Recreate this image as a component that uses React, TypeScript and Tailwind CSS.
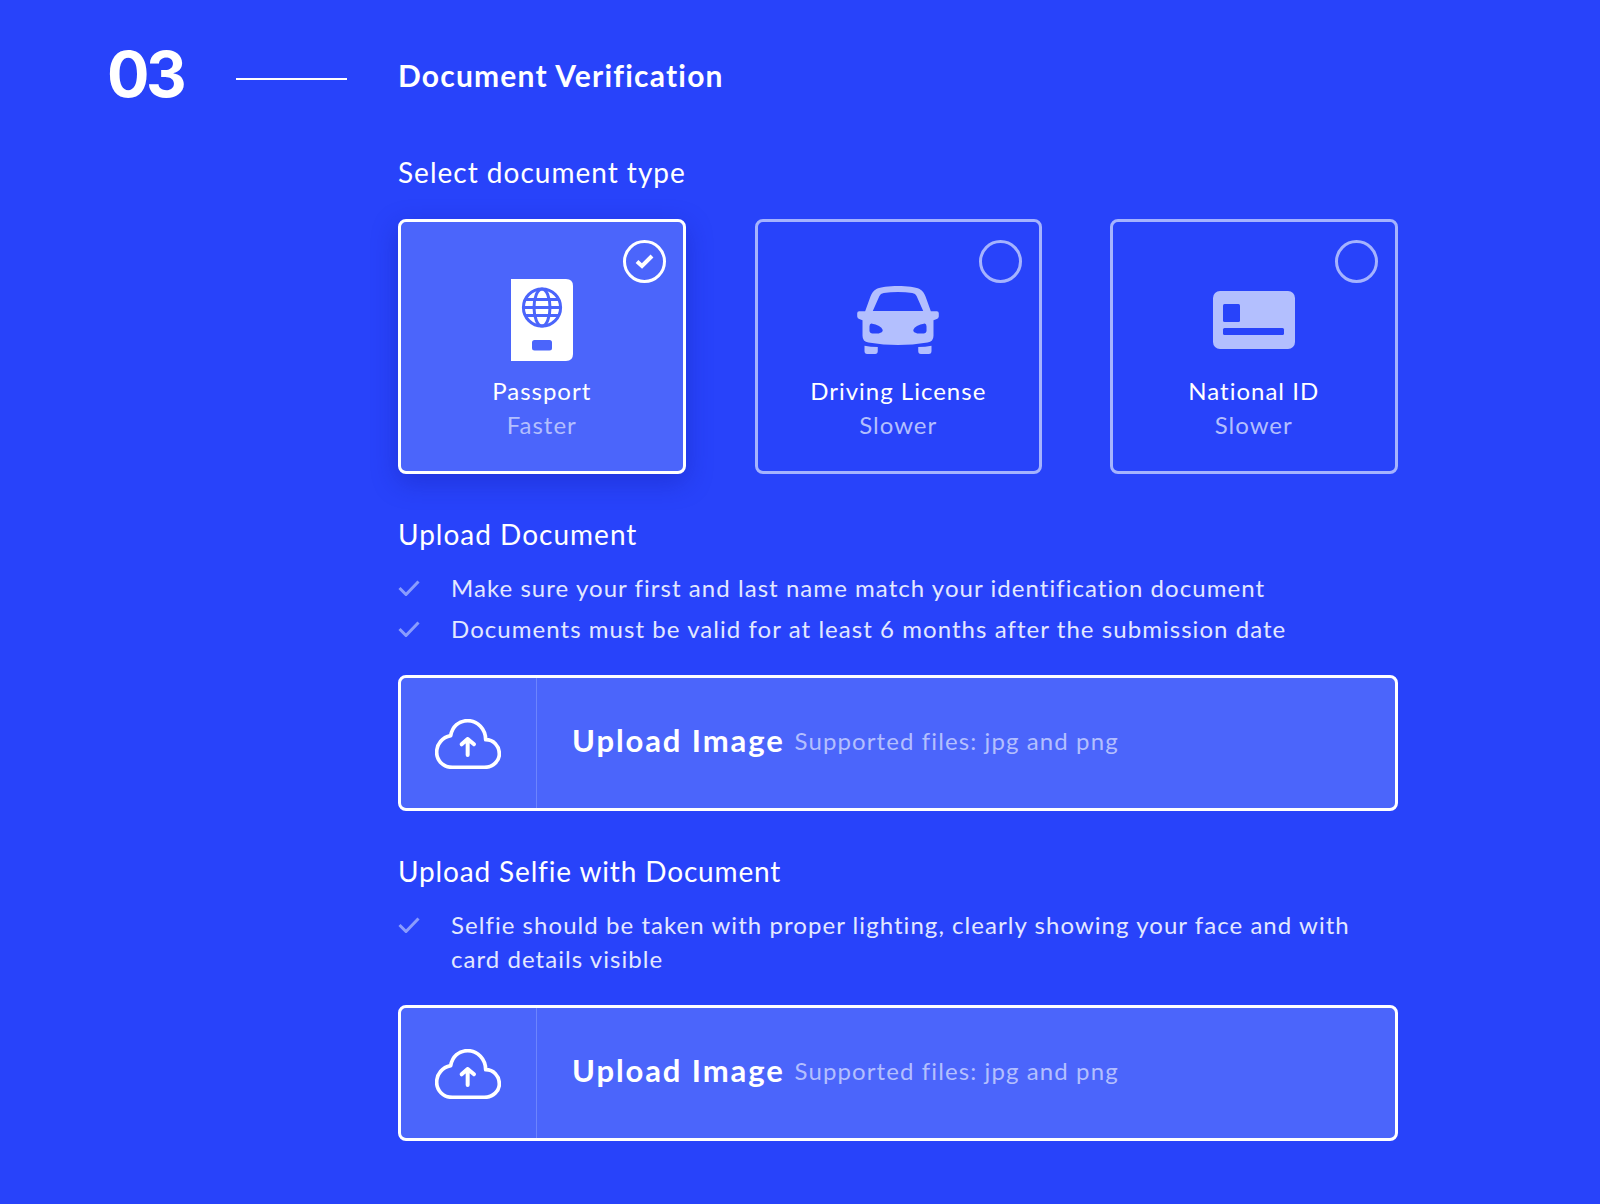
import { Fragment } from 'react';

function PassportIcon() {
  return (
    <svg width="62" height="82" viewBox="0 0 62 82">
      <path d="M0 0H55Q62 0 62 7V75Q62 82 55 82H0Z" fill="#fff" />
      <g fill="none" stroke="#4b65fb" strokeWidth="3">
        <circle cx="31" cy="28.5" r="18.6" />
        <ellipse cx="31" cy="28.5" rx="8" ry="18.6" />
        <path d="M12.5 28.5H49.5M14 20.5H48M14 36.5H48" />
      </g>
      <rect x="21" y="61" width="20" height="10.5" rx="2.5" fill="#4b65fb" />
    </svg>
  );
}

function CarIcon() {
  return (
    <svg width="82" height="68" viewBox="0 0 246 205" fill="#b3bffe">
      <path
        fillRule="evenodd"
        d="M123 0C95 0 70 3 58 9C48 14 44 22 40 32L24 76L6 76Q0 76 0 82L0 92Q0 98 8 100L16 103L16 150Q16 168 34 170Q80 178 123 178Q166 178 212 170Q230 168 230 150L230 103L238 100Q246 98 246 92L246 82Q246 76 240 76L222 76L206 32C202 22 198 14 188 9C176 3 151 0 123 0ZM47 75L67 30Q70 22 80 21Q100 18 123 18Q146 18 166 21Q176 22 179 30L199 75ZM42 113Q37 115 37 122L37 135Q38 143 46 143L65 143Q77 141 77 133Q72 118 42 113ZM204 113Q209 115 209 122L209 135Q208 143 200 143L181 143Q169 141 169 133Q174 118 204 113Z"
      />
      <path d="M22 180Q40 184 62 184L62 196Q62 205 54 205L30 205Q22 205 22 196Z" />
      <path d="M224 180Q206 184 184 184L184 196Q184 205 192 205L216 205Q224 205 224 196Z" />
    </svg>
  );
}

function IdCardIcon() {
  return (
    <svg width="82" height="58" viewBox="0 0 82 58">
      <rect width="82" height="58" rx="7" fill="#b3bffe" />
      <rect x="10" y="13" width="17" height="18" rx="1.5" fill="#2843fa" />
      <rect x="10" y="37" width="61" height="7" rx="1.5" fill="#2843fa" />
    </svg>
  );
}

function CloudIcon() {
  return (
    <svg width="66" height="50" viewBox="0 0 198 150" fill="none" stroke="#fff" strokeLinecap="round" strokeLinejoin="round">
      <path strokeWidth="11" d="M52 145L148 145C175 145 193 125 193 105C193 80 175 62 152 62C152 30 128 5 98 5C72 5 52 22 47 50C22 55 5 75 5 100C5 125 25 145 52 145Z" />
      <path strokeWidth="12" d="M98 108V60M80 76L98 60L117 76" />
    </svg>
  );
}

function Tick() {
  return (
    <svg width="22" height="16" viewBox="0 0 22 16" fill="none" stroke="#8a9cfd" strokeWidth="3" className="mt-[9px] shrink-0">
      <path d="M1.5 8L8 14.5L20.5 1.5" />
    </svg>
  );
}

function DocCard({ icon, title, speed, selected, className = '' }: { icon: React.ReactNode; title: string; speed: string; selected?: boolean; className?: string }) {
  return (
    <div
      className={
        (selected
          ? 'relative flex h-[255px] w-[287.5px] flex-col items-center rounded-[8px] border-[3px] border-white bg-[#4b65fb] pt-[57px] shadow-[0_8px_26px_rgba(20,30,170,0.4)] '
          : 'relative flex h-[255px] w-[287.5px] flex-col items-center rounded-[8px] border-[3px] border-[#a5b3fe] pt-[57px] ') + className
      }
    >
      {selected ? (
        <div className="absolute right-[17px] top-[18px] flex h-[43px] w-[43px] items-center justify-center rounded-full border-[3px] border-white">
          <svg width="19" height="15" viewBox="0 0 19 15" fill="none" stroke="#fff" strokeWidth="4">
            <path d="M2 7.5L7 12L17 2" />
          </svg>
        </div>
      ) : (
        <div className="absolute right-[17px] top-[18px] h-[43px] w-[43px] rounded-full border-[3px] border-[#a5b3fe]" />
      )}
      <div className="flex h-[82px] items-center justify-center">{icon}</div>
      <div className="mt-[13px] text-[24px] leading-[34px] tracking-[1px] text-white">{title}</div>
      <div className="text-[24px] leading-[34px] tracking-[1px] text-[#b3bffe]">{speed}</div>
    </div>
  );
}

function UploadBox({ className }: { className: string }) {
  return (
    <div className={'flex h-[136px] items-stretch rounded-[8px] border-[3px] border-white bg-[#4b65fb] ' + className}>
      <div className="flex w-[136px] items-center justify-center border-r border-[#6d84fd] pr-[1px] pt-[2px]">
        <CloudIcon />
      </div>
      <div className="flex items-center pb-[5px] pl-[35px]">
        <span className="text-[31px] font-bold tracking-[1.9px] text-white">Upload Image</span>
        <span className="ml-[10px] text-[24px] tracking-[1.1px] text-[#b3bffe]">Supported files: jpg and png</span>
      </div>
    </div>
  );
}

const heading = 'text-[28px] leading-[34px] tracking-[1px] text-white';
const bullet = 'text-[24px] leading-[34px] tracking-[1.05px] text-[#e3e8ff]';

export default function App() {
  return (
    <div className="h-[1204px] w-[1600px] overflow-hidden bg-[#2843fa] font-['Lato',sans-serif]">
      <div className="flex h-[64px] items-center pl-[107px] mt-[44px]">
        <div className="w-[129px] -mt-[5px] font-['Inter',sans-serif] text-[63px] font-bold leading-[64px] tracking-[-3.5px] text-white">03</div>
        <div className="h-[2px] w-[111px] bg-white mt-[6px]" />
        <div className="ml-[51px] -mt-[2px] text-[30px] font-bold tracking-[1.2px] text-white">Document Verification</div>
      </div>

      <div className="ml-[398px] w-[999.5px]">
        <div className={heading + ' mt-[47px]'}>Select document type</div>
        <div className="mt-[30px] flex">
          <DocCard icon={<PassportIcon />} title="Passport" speed="Faster" selected />
          <DocCard icon={<CarIcon />} title="Driving License" speed="Slower" className="ml-[69px]" />
          <DocCard icon={<IdCardIcon />} title="National ID" speed="Slower" className="ml-[68px]" />
        </div>

        <div className={heading + ' mt-[43px]'}>Upload Document</div>
        <div className="mt-[20px] flex flex-col gap-[7px]">
          {[
            'Make sure your first and last name match your identification document',
            'Documents must be valid for at least 6 months after the submission date',
          ].map((line) => (
            <Fragment key={line}>
              <div className="flex gap-[31px]">
                <Tick />
                <div className={bullet}>{line}</div>
              </div>
            </Fragment>
          ))}
        </div>
        <UploadBox className="mt-[29px]" />

        <div className="mt-[43px] text-[28px] leading-[34px] tracking-[0.85px] text-white">Upload Selfie with Document</div>
        <div className="mt-[20px] flex gap-[31px]">
          <Tick />
          <div className={bullet}>
            Selfie should be taken with proper lighting, clearly showing your face and with
            <br />
            card details visible
          </div>
        </div>
        <UploadBox className="mt-[29px]" />
      </div>
    </div>
  );
}
